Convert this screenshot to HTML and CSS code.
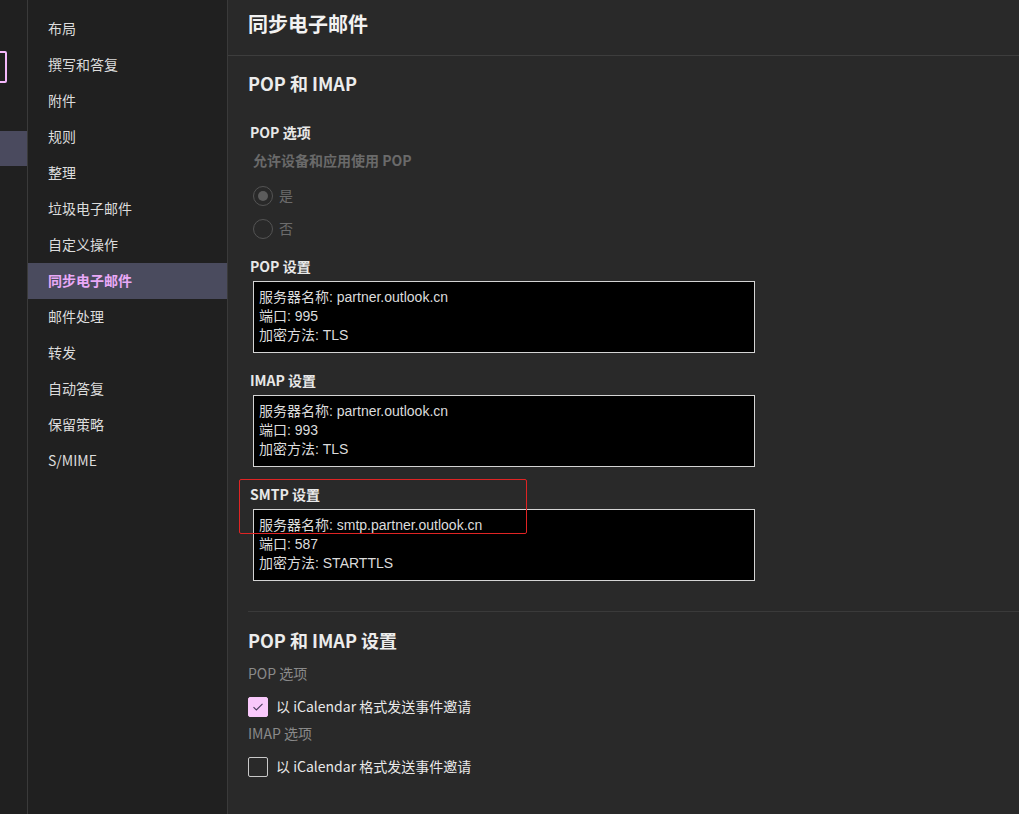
FILE: index.html
```html
<!DOCTYPE html>
<html lang="zh-CN">
<head>
    <meta charset="UTF-8">
    <meta name="viewport" content="width=device-width, initial-scale=1.0">
    <title>同步电子邮件</title>
    <link rel="stylesheet" href="styles.css">
</head>
<body>
    <div class="rail">
        <div class="rail-box"></div>
        <div class="rail-active"></div>
    </div>

    <nav class="nav">
        <div class="nav-item">布局</div>
        <div class="nav-item">撰写和答复</div>
        <div class="nav-item">附件</div>
        <div class="nav-item">规则</div>
        <div class="nav-item">整理</div>
        <div class="nav-item">垃圾电子邮件</div>
        <div class="nav-item">自定义操作</div>
        <div class="nav-item active">同步电子邮件</div>
        <div class="nav-item">邮件处理</div>
        <div class="nav-item">转发</div>
        <div class="nav-item">自动答复</div>
        <div class="nav-item">保留策略</div>
        <div class="nav-item">S/MIME</div>
    </nav>

    <main class="main">
        <header class="page-title">同步电子邮件</header>

        <div class="content">
            <h2 class="section-title first">POP 和 IMAP</h2>

            <h3 class="label pop-options">POP 选项</h3>
            <p class="hint">允许设备和应用使用 POP</p>
            <div class="radio-row first-radio">
                <span class="radio checked"></span>
                <span class="radio-text">是</span>
            </div>
            <div class="radio-row second-radio">
                <span class="radio"></span>
                <span class="radio-text">否</span>
            </div>

            <div class="server-group">
                <h3 class="label">POP 设置</h3>
                <div class="server-box">
                    <div>服务器名称: partner.outlook.cn</div>
                    <div>端口: 995</div>
                    <div>加密方法: TLS</div>
                </div>
            </div>

            <div class="server-group">
                <h3 class="label">IMAP 设置</h3>
                <div class="server-box">
                    <div>服务器名称: partner.outlook.cn</div>
                    <div>端口: 993</div>
                    <div>加密方法: TLS</div>
                </div>
            </div>

            <div class="server-group smtp">
                <h3 class="label">SMTP 设置</h3>
                <div class="server-box">
                    <div>服务器名称: smtp.partner.outlook.cn</div>
                    <div>端口: 587</div>
                    <div>加密方法: STARTTLS</div>
                </div>
                <div class="highlight"></div>
            </div>

            <hr class="divider">

            <h2 class="section-title">POP 和 IMAP 设置</h2>
            <p class="sub-label">POP 选项</p>
            <div class="check-row">
                <span class="checkbox checked">
                    <svg width="12" height="10" viewBox="0 0 12 10"><path d="M1.5 5.2 L4.4 8 L10.5 1.8" fill="none" stroke="#4a3d5c" stroke-width="1.1"/></svg>
                </span>
                <span class="check-text">以 iCalendar 格式发送事件邀请</span>
            </div>
            <p class="sub-label imap">IMAP 选项</p>
            <div class="check-row">
                <span class="checkbox"></span>
                <span class="check-text">以 iCalendar 格式发送事件邀请</span>
            </div>
        </div>
    </main>
</body>
</html>
```

FILE: styles.css
```css
* {
    margin: 0;
    padding: 0;
    box-sizing: border-box;
}

body {
    background-color: #292929;
    height: 100vh;
    display: flex;
    overflow: hidden;
    color: #e6e6e6;
    font-family: "Noto Sans CJK SC", "Liberation Sans", sans-serif;
    font-size: 14px;
}

/* far left app rail */
.rail {
    width: 28px;
    flex-shrink: 0;
    background-color: #202020;
    border-right: 1px solid #3a3a3a;
    overflow: hidden;
}

.rail-box {
    width: 27px;
    height: 32px;
    margin-top: 51px;
    margin-left: -20px;
    border: 2px solid #f4b8fb;
    border-radius: 2px;
}

.rail-active {
    width: 27px;
    height: 35px;
    margin-top: 48px;
    background-color: #4a4a5e;
}

/* settings navigation */
.nav {
    width: 200px;
    flex-shrink: 0;
    background-color: #202020;
    border-right: 1px solid #3a3a3a;
    padding-top: 11px;
}

.nav-item {
    height: 36px;
    line-height: 34px;
    padding-left: 20px;
    color: #dcdcdc;
    font-size: 14px;
}

.nav-item.active {
    background-color: #4a4b5e;
    color: #e9a9f7;
    font-weight: bold;
}

/* main panel */
.main {
    flex: 1;
    background-color: #292929;
}

.page-title {
    height: 56px;
    line-height: 48px;
    padding-left: 20px;
    border-bottom: 1px solid #3d3d3d;
    font-size: 20px;
    font-weight: bold;
    color: #f2f2f2;
}

.content {
    padding-left: 20px;
}

.section-title {
    font-size: 18px;
    line-height: 22px;
    padding-bottom: 2px;
    font-weight: bold;
    color: #ececec;
    margin-top: 17px;
}

.section-title.first {
    margin-top: 16px;
}

.label {
    font-size: 14px;
    line-height: 18px;
    padding-bottom: 2px;
    font-weight: bold;
    color: #e8e8e8;
    margin-left: 2px;
}

.pop-options {
    margin-top: 27px;
}

.hint {
    margin-top: 8px;
    margin-left: 5px;
    line-height: 18px;
    padding-bottom: 2px;
    font-weight: bold;
    color: #6a6a6a;
}

.radio-row {
    display: flex;
    align-items: center;
    height: 20px;
    margin-left: 5px;
}

.first-radio {
    margin-top: 15px;
}

.second-radio {
    margin-top: 13px;
}

.radio {
    width: 20px;
    height: 20px;
    border: 1.5px solid #545454;
    border-radius: 50%;
    display: flex;
    justify-content: center;
    align-items: center;
}

.radio.checked::after {
    content: "";
    width: 10px;
    height: 10px;
    border-radius: 50%;
    background-color: #5c5c5c;
}

.radio-text {
    margin-left: 6px;
    margin-top: -2px;
    color: #6c6c6c;
}

.server-group {
    margin-top: 18px;
}

.server-box {
    width: 502px;
    margin-top: 4px;
    margin-left: 5px;
    background-color: #000;
    border: 1px solid #d4d4d4;
    padding: 6px 5px 7px;
    font-family: "Liberation Sans", "Noto Sans CJK SC", sans-serif;
    font-size: 14px;
    line-height: 19px;
    color: #dcdcdc;
}

.smtp {
    position: relative;
}

.highlight {
    position: absolute;
    left: -9px;
    top: -6px;
    width: 288px;
    height: 55px;
    border: 1px solid #e02424;
    border-radius: 2px;
}

.divider {
    border: none;
    border-top: 1px solid #3a3a3a;
    margin-top: 30px;
}

.sub-label {
    margin-top: 11px;
    line-height: 18px;
    padding-bottom: 2px;
    color: #8a8a8a;
}

.sub-label.imap {
    margin-top: 7px;
}

.check-row {
    display: flex;
    align-items: center;
    height: 20px;
    margin-top: 13px;
}

.checkbox {
    width: 20px;
    height: 20px;
    border: 1px solid #c8c8c8;
    border-radius: 2px;
    display: flex;
    justify-content: center;
    align-items: center;
}

.checkbox.checked {
    background-color: #f9c8fb;
    border-color: #f9c8fb;
}

.check-text {
    margin-left: 8px;
    margin-top: -2px;
    color: #e8e8e8;
}
```
